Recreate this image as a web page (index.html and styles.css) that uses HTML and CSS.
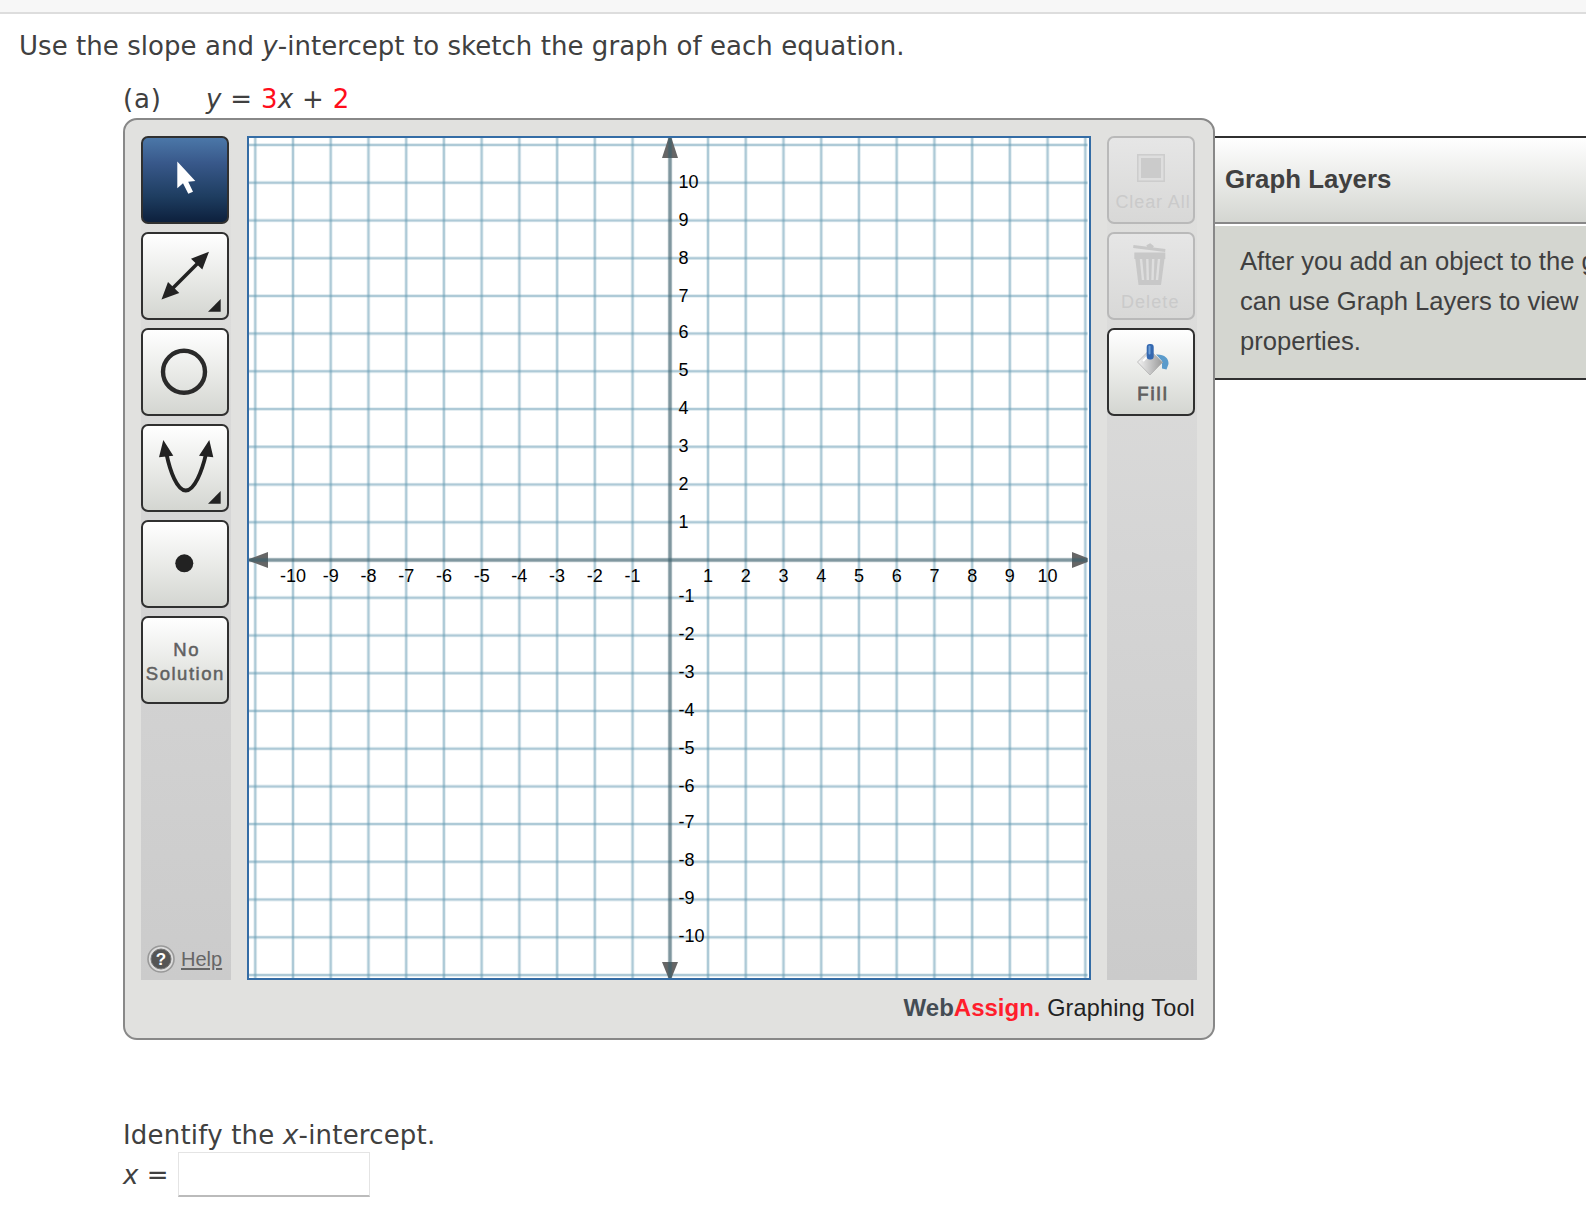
FILE: index.html
```
<!DOCTYPE html>
<html lang="en">
<head>
    <meta charset="UTF-8">
    <meta name="viewport" content="width=device-width, initial-scale=1.0">
    <title>Graphing Tool</title>
    <link rel="stylesheet" href="styles.css">
</head>
<body>
    <div class="top-bar"></div>

    <main>
        <p class="question">Use the slope and <i>y</i>-intercept to sketch the graph of each equation.</p>

        <div class="part">
            <div class="equation">
                <span class="part-label">(a)</span>
                <span class="formula"><i>y</i> = <b>3</b><i>x</i> + <b>2</b></span>
            </div>

            <div class="tool-row">
                <div class="graph-tool">
                    <div class="tool-main">
                        <div class="toolbar">
                            <button class="tool active" aria-label="Select">
                                <svg viewBox="2 2 84 84"><path d="M36.3 25.5V52.3L42 47.3L47.3 57.8L52 55.8L47.2 45.8L54.3 45Z" fill="#fff"/></svg>
                            </button>
                            <button class="tool" aria-label="Line">
                                <svg viewBox="2 2 84 84" fill="#222">
                                    <path d="M29 59L60 28" stroke="#222" stroke-width="3.6"/>
                                    <path d="M68 19.7L50 26.7L61.3 37.6ZM20.5 67.5L27 50L38.3 61Z"/>
                                    <path d="M67 79.7L79.7 67V79.7Z"/>
                                </svg>
                            </button>
                            <button class="tool" aria-label="Circle">
                                <svg viewBox="2 2 84 84"><circle cx="43" cy="43.8" r="21" fill="none" stroke="#2a2a2a" stroke-width="4.4"/></svg>
                            </button>
                            <button class="tool" aria-label="Parabola">
                                <svg viewBox="2 2 84 84" fill="#222">
                                    <path d="M25.5 30C29 47 36 66.5 44.8 66.5C53.6 66.5 61 47 65 30" fill="none" stroke="#222" stroke-width="3.8"/>
                                    <path d="M22.3 16L18 33.3L32.3 31.7ZM68.3 16L58 31.7L72.3 33.3Z"/>
                                    <path d="M67 79.7L79.7 67V79.7Z"/>
                                </svg>
                            </button>
                            <button class="tool" aria-label="Point">
                                <svg viewBox="2 2 84 84"><circle cx="43.3" cy="43.3" r="9" fill="#222"/></svg>
                            </button>
                            <button class="tool">
                                <svg viewBox="2 2 84 84">
                                    <text x="45.7" y="39.5">No</text>
                                    <text x="44.3" y="64">Solution</text>
                                </svg>
                            </button>
                            <div class="help">
                                <svg viewBox="0 0 28 28">
                                    <circle cx="14" cy="14" r="13" fill="#ddd" stroke="#999" stroke-width="1.6"/>
                                    <circle cx="14" cy="14" r="10" fill="#555" stroke="#777" stroke-width="1"/>
                                    <text x="14" y="20">?</text>
                                </svg>
                                <a>Help</a>
                            </div>
                        </div>

                        <svg class="graph" id="graph" viewBox="247 136 844 844"></svg>

                        <div class="toolbar">
                            <button class="tool disabled">
                                <svg viewBox="2 2 84 84">
                                    <rect x="30.8" y="18.8" width="26.4" height="26.4" fill="#dedede" stroke="#cdcdcd" stroke-width="1.6"/>
                                    <rect x="34" y="22" width="20" height="20" fill="#cbcbcb"/>
                                    <text class="clear-label" x="46" y="71.5">Clear All</text>
                                </svg>
                            </button>
                            <button class="tool disabled">
                                <svg viewBox="2 2 84 84">
                                    <path d="M26.3 14.5L58.3 18.5M40 14.5L43 13L46 15.5" fill="none" stroke="#c8c8c8" stroke-width="3"/>
                                    <path d="M27.3 20.5H58.3V27H57.5L54 53H31.5L28.3 27H27.3Z" fill="#c8c8c8"/>
                                    <path d="M34 27L36 48M40.3 27L40.8 48M46.2 27L45.5 48M52 27L50 48" stroke="#dedede" stroke-width="2.4"/>
                                    <text class="delete-label" x="43.2" y="75.5">Delete</text>
                                </svg>
                            </button>
                            <button class="tool">
                                <svg viewBox="2 2 84 84">
                                    <defs>
                                        <linearGradient id="bucket">
                                            <stop offset="0" stop-color="#f4f4f4"/>
                                            <stop offset="1" stop-color="#999"/>
                                        </linearGradient>
                                    </defs>
                                    <path d="M49 26.5C57 26 62 30 61.5 36L59.5 41.5L55 40.5V33Z" fill="#5b9bcb"/>
                                    <path d="M30.5 34L42.5 22L55.7 34.3L43 47Z" fill="url(#bucket)" stroke="#b0b0b0" stroke-width=".8"/>
                                    <path d="M36 33L43 26" stroke="#fff" stroke-width="2"/>
                                    <rect x="39.7" y="16" width="7" height="15.4" rx="3" fill="#3468b0"/>
                                    <rect x="41.5" y="17.5" width="2" height="9" rx="1" fill="#6f9fd6"/>
                                    <text class="fill-label" x="46" y="72">Fill</text>
                                </svg>
                            </button>
                        </div>
                    </div>
                    <div class="brand"><b>Web<span>Assign.</span></b> Graphing Tool</div>
                </div>

                <div class="layers">
                    <h2>Graph Layers</h2>
                    <p>After you add an object to the graph you<br>can use Graph Layers to view and edit its<br>properties.</p>
                </div>
            </div>

            <p class="identify">Identify the <i>x</i>-intercept.</p>
            <label class="answer"><span><i>x</i> =</span><input type="text"></label>
        </div>
    </main>

    <script>
        const graph = document.getElementById('graph');
        const cx = 670, cy = 560, step = 37.73;

        function add(tag, attrs, text) {
            const el = document.createElementNS('http://www.w3.org/2000/svg', tag);
            for (const key in attrs) el.setAttribute(key, attrs[key]);
            if (text !== undefined) el.textContent = text;
            graph.appendChild(el);
        }

        function line(d, name) {
            add('path', { d: d, class: name + ' soft' });
            add('path', { d: d, class: name });
        }

        for (let i = -11; i <= 11; i++) {
            if (i === 0) continue;
            line(`M${cx + 0.3 + i * step} 138V978`, 'grid');
            line(`M249 ${cy - i * step}H1087.5`, 'grid');
        }

        // Arrowheads sit under the axes
        add('path', { d: 'M668.5 138H671.5L678 158H662ZM668.5 978H671.5L678 962H662ZM249 559V561L268 568V552ZM1087.5 558V562L1072 568V552Z', class: 'arrow' });
        line('M670 138V978', 'axis');
        line('M249 560H1087.5', 'axis');

        for (let i = -10; i <= 10; i++) {
            if (i === 0) continue;
            // baselines snap to even pixels
            const y = 2 * Math.round((cy - i * step + (i > 0 ? 5.2 : 4.8)) / 2);
            add('text', { x: cx + i * step + 0.3, y: 582, class: 'x-label' }, i);
            add('text', { x: 678.6, y: y }, i);
        }
    </script>
</body>
</html>
```
FILE: styles.css
```
body {
    margin: 0;
    height: 1214px;
    overflow: hidden;
    background-color: #fff;
    color: #404040;
    font-family: Verdana, "DejaVu Sans", sans-serif;
    font-size: 26px;
    line-height: 40px;
}

p, h2 {
    margin: 0;
}

.top-bar {
    height: 12px;
    background-color: #f7f7f7;
    border-bottom: 2px solid #ddd;
}

main {
    padding: 12px 0 0 19px;
}

.question {
    white-space: nowrap;
    letter-spacing: 0.05px;
}

.part {
    margin-left: 104px;
    padding-top: 13px;
}

/* Equation */
.equation {
    display: flex;
    height: 39px;
    letter-spacing: 0.3px;
}

.part-label {
    width: 83px;
    letter-spacing: 0.8px;
}

.formula b {
    color: #ff0d1a;
    font-weight: normal;
}

/* Graphing tool */
.tool-row {
    display: flex;
    width: 1463px;
    overflow: hidden;
}

.graph-tool {
    box-sizing: border-box;
    flex: none;
    width: 1092px;
    height: 922px;
    padding: 16px;
    background-color: #e1e1df;
    border: 2px solid #888;
    border-radius: 14px;
}

.tool-main {
    display: flex;
    gap: 16px;
}

.toolbar {
    display: flex;
    flex-direction: column;
    gap: 8px;
    width: 90px;
    height: 844px;
    background: linear-gradient(#e1e1df, #d5d5d5 50%, #cbcbcb);
}

.tool {
    box-sizing: border-box;
    width: 88px;
    height: 88px;
    padding: 0;
    background: linear-gradient(#fff, #d4d6d1);
    border: 2px solid #303030;
    border-radius: 7px;
}

.tool svg {
    display: block;
    width: 84px;
    height: 84px;
}

.tool text {
    font-family: "Liberation Sans", Arial, sans-serif;
    font-size: 18.5px;
    letter-spacing: 1.5px;
    text-anchor: middle;
    fill: #606060;
    stroke: #606060;
    stroke-width: 0.5px;
}

.tool.active {
    background: linear-gradient(#4b77a8, #38588a 30%, #1e3d60 70%, #0d203d);
}

.tool.disabled {
    background: linear-gradient(#e6e6e6, #d8d8d7);
    border-color: #b9b9b9;
}

.tool.disabled text {
    fill: #cacaca;
    stroke: none;
}

.tool .clear-label {
    font-size: 18px;
    letter-spacing: 0.9px;
}

.tool .delete-label {
    font-size: 18px;
    letter-spacing: 1.1px;
}

.tool .fill-label {
    letter-spacing: 2px;
    stroke-width: 0.8px;
}

/* Help link */
.help {
    display: flex;
    align-items: center;
    gap: 6px;
    margin-top: auto;
    padding: 0 0 6px 6px;
    height: 30px;
    font: 20px "Liberation Sans", Arial, sans-serif;
    color: #666;
}

.help svg {
    width: 28px;
    height: 28px;
}

.help text {
    font-size: 17px;
    font-weight: bold;
    text-anchor: middle;
    fill: #fff;
}

.help a {
    text-decoration: underline;
    text-underline-offset: 2px;
    text-decoration-thickness: 2px;
    text-decoration-skip-ink: auto;
}

/* Graph */
.graph {
    box-sizing: border-box;
    flex: none;
    width: 844px;
    height: 844px;
    background-color: #fff;
    outline: 2px solid #346ca5;
    outline-offset: -2px;
}

.grid {
    stroke: rgba(100, 155, 178, 0.42);
    stroke-width: 2;
}

.grid.soft {
    stroke: rgba(100, 155, 178, 0.18);
    stroke-width: 3.8;
}

.axis {
    stroke: rgba(60, 95, 108, 0.5);
    stroke-width: 3;
}

.axis.soft {
    stroke: rgba(60, 95, 108, 0.3);
    stroke-width: 4.5;
}

.arrow {
    fill: #666;
}

.graph text {
    font: 18px "Liberation Sans", Arial, sans-serif;
    fill: #000;
}

.graph .x-label {
    text-anchor: middle;
}

.brand {
    margin-top: 8px;
    padding-right: 2px;
    text-align: right;
    font: 23.4px/40px "Liberation Sans", Arial, sans-serif;
    letter-spacing: 0.2px;
    color: #222;
}

.brand b {
    font-size: 24px;
    letter-spacing: 0;
    color: #444c54;
}

.brand b span {
    color: #ff1e2d;
}

/* Graph layers */
.layers {
    flex: 1;
    height: 244px;
    box-sizing: border-box;
    margin-top: 18px;
    border-top: 2px solid #303030;
    border-bottom: 2px solid #303030;
    background-color: #d4d6d0;
    font-family: "Liberation Sans", Arial, sans-serif;
    font-size: 25.6px;
    white-space: nowrap;
    overflow: hidden;
}

.layers h2 {
    height: 84px;
    padding-left: 10px;
    font-size: 25.8px;
    line-height: 82px;
    background: linear-gradient(#fff, #d4d6d1);
    border-bottom: 2px solid #888;
    box-shadow: 0 2px #fff;
}

.layers p {
    padding: 17px 0 0 25px;
}

/* Answer */
.identify {
    margin-top: 75px;
    letter-spacing: 0.2px;
}

.answer {
    display: flex;
    align-items: center;
    height: 44px;
    margin-top: -3px;
}

.answer span {
    width: 55px;
    padding-top: 2px;
}

.answer input {
    box-sizing: border-box;
    width: 192px;
    height: 45px;
    border: 1px solid #e4e4e4;
    border-bottom: 2px solid #bbb;
    background-color: #fff;
    outline: none;
}
```
